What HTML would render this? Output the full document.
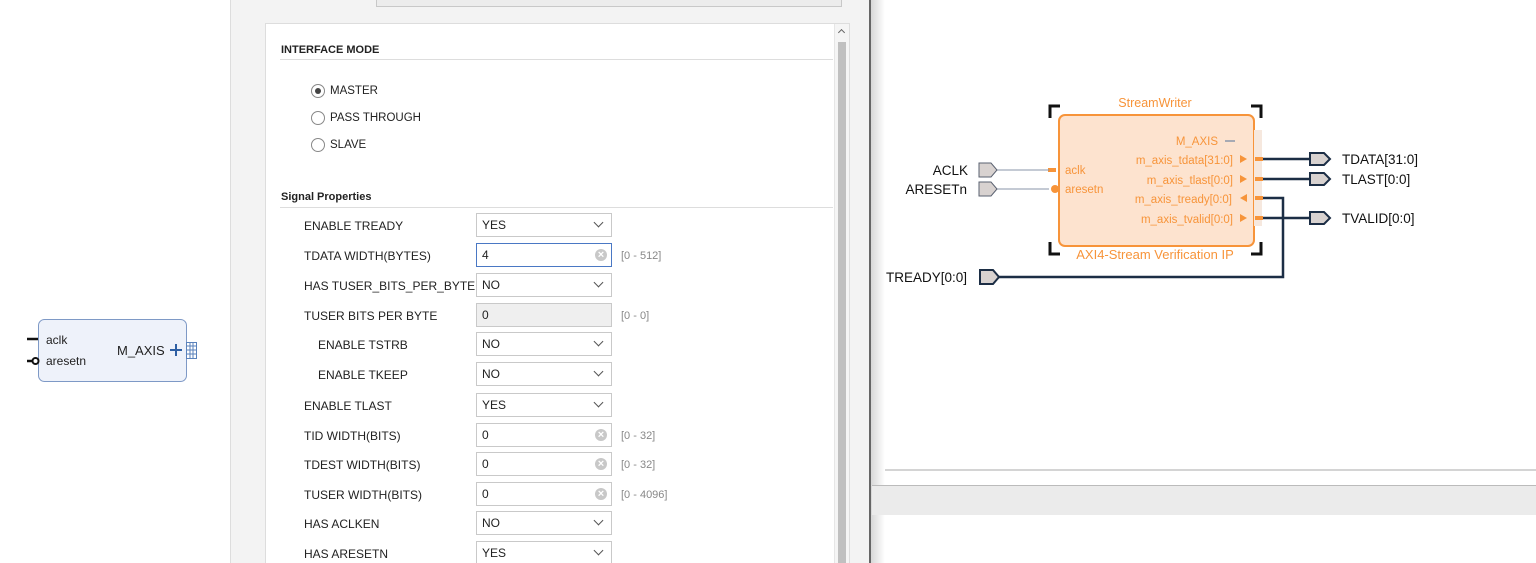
<!DOCTYPE html>
<html><head><meta charset="utf-8"><style>
*{margin:0;padding:0;box-sizing:border-box}
html,body{width:1536px;height:563px;overflow:hidden}
body{background:#fff;font-family:"Liberation Sans",Arial,sans-serif;position:relative}
.a{position:absolute}
.lbl{position:absolute;font-size:12px;color:#222;white-space:nowrap}
.box{position:absolute;left:476px;width:136px;height:24px;border:1px solid #c9c9c9;background:#fff;font-size:12px;color:#222;padding:4px 0 0 5px}
.sel::after{content:"";position:absolute;right:9px;top:5px;width:6px;height:6px;border-right:1.5px solid #555;border-bottom:1.5px solid #555;transform:rotate(45deg)}
.clr::after{content:"×";position:absolute;right:4px;top:5px;width:12px;height:12px;border-radius:50%;background:#c8c8c8;color:#fff;font-size:11px;line-height:12px;text-align:center;font-weight:bold}
.rng{position:absolute;left:621px;font-size:11px;color:#888}
.radio{position:absolute;left:311px;width:14px;height:14px;border:1px solid #888;border-radius:50%;background:#fff}
</style></head><body>
<svg class="a" style="left:0;top:0" width="230" height="563">
<rect x="38.5" y="319.5" width="148" height="62" rx="6" fill="#eef2fa" stroke="#7e99c6"/>
<line x1="27" y1="339" x2="38" y2="339" stroke="#111" stroke-width="2.5"/>
<line x1="27" y1="361" x2="34" y2="361" stroke="#111" stroke-width="2.5"/>
<circle cx="35.5" cy="361" r="3" fill="#fff" stroke="#111" stroke-width="2"/>
<text x="46" y="344" font-size="12" fill="#222" font-family="Liberation Sans">aclk</text>
<text x="46" y="365" font-size="12" fill="#222" font-family="Liberation Sans">aresetn</text>
<text x="117" y="355" font-size="13" fill="#222" font-family="Liberation Sans">M_AXIS</text>
<path d="M170 350h12M176 344v12" stroke="#2e5fa3" stroke-width="2"/>
<rect x="186.5" y="342.5" width="10" height="16" fill="#fff" stroke="#5a82bb"/>
<path d="M187 346h10M187 350h10M187 354h10M190 343v15M193 343v15" stroke="#5a82bb" stroke-width="1"/>
</svg>
<div class="a" style="left:230px;top:0;width:641px;height:563px;background:#f3f3f3;border-left:1px solid #ddd;border-right:2px solid #666"></div>
<div class="a" style="left:871px;top:0;width:14px;height:563px;background:linear-gradient(90deg,#d8d8d8,#fff)"></div>
<div class="a" style="left:376px;top:-10px;width:466px;height:17px;background:#ececec;border:1px solid #c8c8c8"></div>
<div class="a" style="left:265px;top:23px;width:585px;height:545px;background:#fff;border:1px solid #ddd"></div>
<div class="a" style="left:834px;top:24px;width:15px;height:539px;background:#f5f5f5;border-left:1px solid #e6e6e6"></div>
<div class="a" style="left:838px;top:42px;width:8px;height:521px;background:#c0c0c0"></div>
<div class="a" style="left:839px;top:30px;width:5px;height:5px;border-left:1.5px solid #666;border-top:1.5px solid #666;transform:rotate(45deg)"></div>
<div class="lbl" style="left:281px;top:44px;font-weight:bold;font-size:11px">INTERFACE MODE</div>
<div class="a" style="left:280px;top:59px;width:553px;height:1px;background:#ddd"></div>
<div class="radio" style="top:84px"><div class="a" style="left:3px;top:3px;width:6px;height:6px;border-radius:50%;background:#444"></div></div>
<div class="lbl" style="left:330px;top:85px;font-size:11.5px">MASTER</div>
<div class="radio" style="top:111px"></div>
<div class="lbl" style="left:330px;top:112px;font-size:11.5px">PASS THROUGH</div>
<div class="radio" style="top:138px"></div>
<div class="lbl" style="left:330px;top:139px;font-size:11.5px">SLAVE</div>
<div class="lbl" style="left:281px;top:191px;font-weight:bold;font-size:11px">Signal Properties</div>
<div class="a" style="left:280px;top:207px;width:553px;height:1px;background:#ddd"></div>

<div class="lbl" style="left:304px;top:219px">ENABLE TREADY</div><div class="box sel" style="top:213px">YES</div>
<div class="lbl" style="left:304px;top:249px">TDATA WIDTH(BYTES)</div><div class="box clr" style="top:243px;border-color:#4a78c4">4</div><div class="rng" style="top:250px">[0 - 512]</div>
<div class="lbl" style="left:304px;top:279px">HAS TUSER_BITS_PER_BYTE</div><div class="box sel" style="top:273px">NO</div>
<div class="lbl" style="left:304px;top:309px">TUSER BITS PER BYTE</div><div class="box" style="top:303px;background:#efefef">0</div><div class="rng" style="top:310px">[0 - 0]</div>
<div class="lbl" style="left:318px;top:338px">ENABLE TSTRB</div><div class="box sel" style="top:332px">NO</div>
<div class="lbl" style="left:318px;top:368px">ENABLE TKEEP</div><div class="box sel" style="top:362px">NO</div>
<div class="lbl" style="left:304px;top:399px">ENABLE TLAST</div><div class="box sel" style="top:393px">YES</div>
<div class="lbl" style="left:304px;top:429px">TID WIDTH(BITS)</div><div class="box clr" style="top:423px">0</div><div class="rng" style="top:430px">[0 - 32]</div>
<div class="lbl" style="left:304px;top:458px">TDEST WIDTH(BITS)</div><div class="box clr" style="top:452px">0</div><div class="rng" style="top:459px">[0 - 32]</div>
<div class="lbl" style="left:304px;top:488px">TUSER WIDTH(BITS)</div><div class="box clr" style="top:482px">0</div><div class="rng" style="top:489px">[0 - 4096]</div>
<div class="lbl" style="left:304px;top:517px">HAS ACLKEN</div><div class="box sel" style="top:511px">NO</div>
<div class="lbl" style="left:304px;top:547px">HAS ARESETN</div><div class="box sel" style="top:541px">YES</div>

<div class="a" style="left:885px;top:469px;width:651px;height:2px;background:#d4d4d4"></div>
<div class="a" style="left:872px;top:485px;width:664px;height:1px;background:#bbb"></div>
<div class="a" style="left:872px;top:486px;width:664px;height:29px;background:#ebebeb"></div>
<svg class="a" style="left:870px;top:0" width="666" height="470" font-family="Liberation Sans">
<g fill="none" stroke="#111" stroke-width="3">
<path d="M180 118v-12h10M381 106h10v12M180 242v12h10M381 254h10v-12"/>
</g>
<text x="285" y="107" font-size="12.5" fill="#f7943a" text-anchor="middle">StreamWriter</text>
<rect x="189" y="115" width="195" height="131" rx="6" fill="#fde3cf" stroke="#f7943a" stroke-width="2"/>
<rect x="384" y="130" width="8" height="96" fill="#f6e8de"/>
<text x="285" y="259" font-size="13" fill="#f7943a" text-anchor="middle">AXI4-Stream Verification IP</text>
<g font-size="11.5" fill="#f7943a" text-anchor="end">
<text x="348" y="145">M_AXIS</text>
<text x="363" y="164">m_axis_tdata[31:0]</text>
<text x="363" y="184">m_axis_tlast[0:0]</text>
<text x="362" y="203">m_axis_tready[0:0]</text>
<text x="363" y="223">m_axis_tvalid[0:0]</text>
<text x="195" y="174" text-anchor="start">aclk</text>
<text x="195" y="193" text-anchor="start">aresetn</text>
</g>
<path d="M355 141h10" stroke="#8a96aa" stroke-width="1.5"/>
<g fill="#f7943a"><path d="M370 155l7 4-7 4z M370 175l7 4-7 4z M377 194l-7 4 7 4z M370 214l7 4-7 4z"/></g>
<g stroke="#f7943a" stroke-width="4"><path d="M385 159h8M385 179h8M385 198h8M385 218h8M178 170h8"/></g>
<circle cx="185" cy="189" r="4" fill="#f7943a"/>
<g stroke="#8a96aa" stroke-width="1"><path d="M125 170h54M125 189h54"/></g>
<g stroke="#1c2e45" stroke-width="2.5" fill="none">
<path d="M393 159h47M393 179h47M393 218h47M393 198h20v79h-288"/>
</g>
<g fill="#d8d2d0" stroke="#1c2e45" stroke-width="2">
<path d="M440 153h14l6 6-6 6h-14z M440 173h14l6 6-6 6h-14z M440 212h14l6 6-6 6h-14z M110 270h13l6 7-6 7h-13z"/>
</g>
<g fill="#d8d2d0" stroke="#5a6170" stroke-width="1">
<path d="M109 163h12l6 7-6 7h-12z M109 182h12l6 7-6 7h-12z"/>
</g>
<g font-size="13.5" fill="#111">
<text x="472" y="164">TDATA[31:0]</text>
<text x="472" y="184">TLAST[0:0]</text>
<text x="472" y="223">TVALID[0:0]</text>
<text x="98" y="175" text-anchor="end">ACLK</text>
<text x="97" y="194" text-anchor="end">ARESETn</text>
<text x="97" y="282" text-anchor="end">TREADY[0:0]</text>
</g>
</svg>
</body></html>
